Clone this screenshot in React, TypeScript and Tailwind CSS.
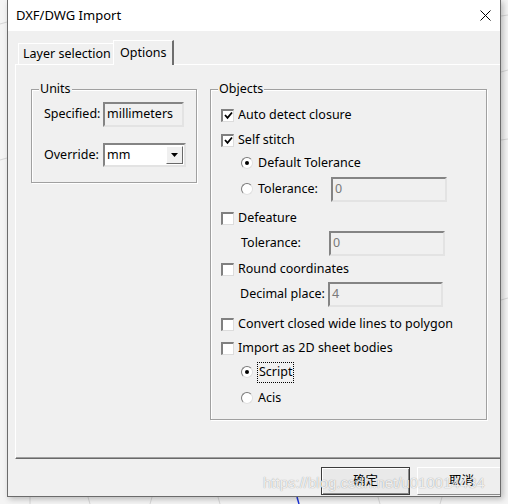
import React from "react";

const sunken =
  "border-2 border-t-[#848484] border-l-[#848484] border-r-[#e3e3e3] border-b-[#e3e3e3]";

function CheckBox({ checked, label, clip }: { checked?: boolean; label: string; clip?: number }) {
  return (
    <div className="flex items-center h-[24px] pl-[10px]">
      <span className="w-[13px] h-[13px] shrink-0 bg-white border-t-2 border-l-2 border-r border-b border-t-[#808080] border-l-[#808080] border-r-[#dcdcdc] border-b-[#dcdcdc] flex items-center justify-center">
        {checked && (
          <svg width="9" height="9" viewBox="0 0 9 9">
            <path d="M1 4 L3.5 6.8 L8 1.5" fill="none" stroke="#000" strokeWidth="1.8" />
          </svg>
        )}
      </span>
      <span
        className="ml-[4px] whitespace-nowrap overflow-hidden"
        style={clip ? { width: clip } : undefined}
      >
        {label}
      </span>
    </div>
  );
}

function RadioDot({ checked }: { checked?: boolean }) {
  return (
    <span className="w-[12px] h-[12px] shrink-0 rounded-full bg-white border border-t-[#7a7a7a] border-l-[#7a7a7a] border-r-[#e0e0e0] border-b-[#e0e0e0] flex items-center justify-center">
      {checked && <span className="w-[4px] h-[4px] rounded-full bg-black" />}
    </span>
  );
}

function Field({ value, w, disabled }: { value: string; w: string; disabled?: boolean }) {
  return (
    <div
      className={`${w} h-[25px] ${sunken} bg-[#f0f0f0] flex items-center pl-[2px] ${
        disabled ? "text-[#7a7a7a]" : "text-black"
      }`}
    >
      {value}
    </div>
  );
}

function Group({
  title,
  className,
  children,
}: {
  title: string;
  className: string;
  children: React.ReactNode;
}) {
  return (
    <div
      className={`relative border border-[#a0a0a0] shadow-[inset_1px_1px_0_#ffffff,1px_1px_0_#ffffff] ${className}`}
    >
      <span className="absolute -top-[10px] left-[7px] px-[1px] bg-[#f0f0f0] leading-[18px]">
        {title}
      </span>
      {children}
    </div>
  );
}

export default function App() {
  return (
    <div className="relative w-[508px] h-[504px] overflow-hidden bg-[#f4f4f4] text-[12.5px] text-black font-['Noto_Sans','Noto_Sans_CJK_SC',sans-serif]">
      {/* faint drawing behind the dialog */}
      <svg className="absolute inset-0" width="508" height="504">
        <g stroke="#d6d6d6" strokeWidth="1" fill="none">
          <path d="M0 24 L7 22" />
          <path d="M0 160 L7 158" />
          <path d="M501 16 L508 15" />
          <path d="M501 72 L508 70" />
          <path d="M501 140 L508 139" />
          <path d="M501 300 L508 298" />
          <path d="M30 504 L30 497 M90 504 L88 497 M150 504 L152 497 M220 504 L218 497 M380 504 L378 497 M440 504 L442 497" />
        </g>
        <path d="M297 497 L299 504" stroke="#1c34d8" strokeWidth="1.5" />
      </svg>

      <div className="relative ml-[7px] w-[494px] h-[497px] flex flex-col bg-[#f0f0f0] border-x border-b border-[#6b6b6b] overflow-hidden shadow-[2px_2px_6px_rgba(0,0,0,0.25)]">
        {/* title bar */}
        <div className="h-[31px] shrink-0 bg-white flex items-center justify-between pl-[8px] pr-[9px]">
          <span className="text-[13px]">DXF/DWG Import</span>
          <svg width="11" height="11" viewBox="0 0 11 11">
            <path d="M0.5 0.5 L10.5 10.5 M10.5 0.5 L0.5 10.5" stroke="#000" strokeWidth="1" />
          </svg>
        </div>

        {/* tabs */}
        <div className="h-[33px] shrink-0 flex items-end pl-[10px]">
          <div className="w-[96px] h-[21px] border-t border-l border-white border-r border-r-[#a0a0a0] flex items-center pl-[4px] leading-none">
            Layer selection
          </div>
          <div className="relative z-10 -ml-[1px] -mb-[1px] w-[61px] h-[25px] bg-[#f0f0f0] border-t border-l border-white border-r-2 border-r-[#6e6e6e] flex items-start pt-[3px] pl-[6px]">
            Options
          </div>
        </div>

        {/* tab panel */}
        <div className="ml-[7px] w-[500px] h-[395px] shrink-0 flex items-start border-t border-l border-white border-b border-b-[#696969] shadow-[inset_0_-1px_0_#a0a0a0]">
          <Group title="Units" className="ml-[15px] mt-[24px] w-[166px] h-[94px] shrink-0">
            <div className="mt-[12px] ml-[12px] h-[25px] flex items-center">
              <span className="w-[59px]">Specified:</span>
              <Field value="millimeters" w="w-[81px]" />
            </div>
            <div className="mt-[16px] ml-[12px] h-[24px] flex items-center">
              <span className="w-[59px]">Override:</span>
              <div className={`w-[83px] h-[24px] ${sunken} bg-white flex items-center justify-between`}>
                <span className="pl-[2px]">mm</span>
                <span className="w-[17px] h-[18px] mr-px bg-[#f0f0f0] border border-t-white border-l-white border-r-[#696969] border-b-[#696969] flex items-center justify-center">
                  <svg width="7" height="4" viewBox="0 0 7 4">
                    <path d="M0 0 L7 0 L3.5 4 Z" fill="#000" />
                  </svg>
                </span>
              </div>
            </div>
          </Group>

          <Group title="Objects" className="ml-[13px] mt-[24px] w-[277px] h-[331px] shrink-0">
            <div className="mt-[13px]">
              <CheckBox checked label="Auto detect closure" />
            </div>
            <div className="mt-[1px]">
              <CheckBox checked label="Self stitch" />
            </div>
            <div className="-mt-px flex items-center h-[24px] pl-[30px]">
              <RadioDot checked />
              <span className="ml-[5px]">Default Tolerance</span>
            </div>
            <div className="mt-[2px] flex items-center h-[24px] pl-[30px]">
              <RadioDot />
              <span className="ml-[5px] w-[73px]">Tolerance:</span>
              <Field value="0" w="w-[116px]" disabled />
            </div>
            <div className="mt-[5px]">
              <CheckBox label="Defeature" />
            </div>
            <div className="mt-[1px] flex items-center h-[24px] pl-[30px]">
              <span className="w-[88px]">Tolerance:</span>
              <Field value="0" w="w-[116px]" disabled />
            </div>
            <div className="mt-[2px]">
              <CheckBox label="Round coordinates" />
            </div>
            <div className="mt-[1px] flex items-center h-[24px] pl-[29px]">
              <span className="w-[88px]">Decimal place:</span>
              <Field value="4" w="w-[115px]" disabled />
            </div>
            <div className="mt-[6px]">
              <CheckBox label="Convert closed wide lines to polygon" clip={216} />
            </div>
            <CheckBox label="Import as 2D sheet bodies" clip={155} />
            <div className="flex items-center h-[24px] pl-[30px]">
              <RadioDot checked />
              <span className="ml-[4px] h-[21px] px-px border border-dotted border-black flex items-center">
                Script
              </span>
            </div>
            <div className="mt-[2px] flex items-center h-[24px] pl-[30px]">
              <RadioDot />
              <span className="ml-[5px]">Acis</span>
            </div>
          </Group>
        </div>

        {/* buttons */}
        <div className="mt-[8px] ml-[313px] flex gap-[7px] shrink-0">
          <button className="w-[89px] h-[28px] shrink-0 bg-[#e9e9e9] border border-[#3c3c3c] shadow-[inset_1px_1px_0_#ffffff,inset_-1px_-1px_0_#8a8a8a]">
            确定
          </button>
          <button className="w-[89px] h-[28px] shrink-0 bg-[#eeeeee] border border-t-white border-l-white border-r-[#8a8a8a] border-b-[#8a8a8a]">
            取消
          </button>
        </div>
      </div>

      {/* watermark */}
      <span className="absolute left-[263px] top-[472px] text-[15px] text-white/85 font-['Liberation_Sans',sans-serif] [text-shadow:0_0_1px_rgba(0,0,0,0.45)] whitespace-nowrap">
        https://blog.csdn.net/u010014434
      </span>
    </div>
  );
}
